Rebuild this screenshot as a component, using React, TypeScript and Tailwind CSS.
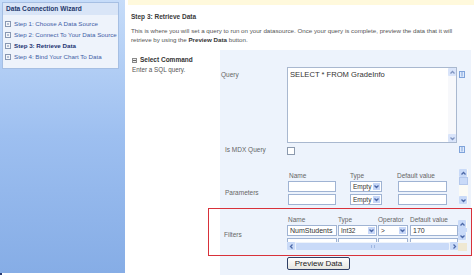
import React from 'react'

const FONT = "font-['Liberation_Sans',Arial,sans-serif]"

function StepIcon() {
  return (
    <span className="w-[6px] h-[6px] border border-[#8797b2] bg-[#f4f6fa] shrink-0 flex items-center justify-center">
      <span className="w-[2px] h-[2px] bg-[#b5c0d4]" />
    </span>
  )
}

function InfoIcon() {
  return (
    <svg width="6" height="7" viewBox="0 0 6 7" className="shrink-0 block">
      <rect x="0.5" y="0.5" width="5" height="6" fill="#dfeafc" stroke="#7fa3da" />
      <line x1="2" y1="2" x2="4" y2="2" stroke="#7fa3da" />
      <line x1="3" y1="3" x2="3" y2="5.5" stroke="#7fa3da" />
    </svg>
  )
}

function Chevron({ dir }: { dir: 'up' | 'down' | 'left' | 'right' }) {
  const d = {
    up: 'M1.5 4.5 L3.5 2.5 L5.5 4.5',
    down: 'M1.5 2.5 L3.5 4.5 L5.5 2.5',
    left: 'M4.5 1.5 L2.5 3.5 L4.5 5.5',
    right: 'M2.5 1.5 L4.5 3.5 L2.5 5.5',
  }[dir]
  return (
    <svg width="7" height="7" viewBox="0 0 7 7" className="block">
      <path d={d} fill="none" stroke="#4d69a8" strokeWidth="1.3" />
    </svg>
  )
}

function ScrollBtn({ dir }: { dir: 'up' | 'down' | 'left' | 'right' }) {
  return (
    <div className="w-[8px] h-[8px] bg-[#c9daf8] rounded-[1px] flex items-center justify-center shrink-0">
      <Chevron dir={dir} />
    </div>
  )
}

function TextBox({ w, value = '' }: { w: string; value?: string }) {
  return (
    <div className={`${w} h-[11px] bg-white border border-[#9fb3d3] text-[7px] text-[#333] leading-[9px] px-[2px] shrink-0 overflow-hidden whitespace-nowrap`}>
      {value}
    </div>
  )
}

function Select({ w, value }: { w: string; value: string }) {
  return (
    <div className={`${w} h-[11px] bg-white border border-[#9fb3d3] flex items-center justify-between pl-[2px] pr-[1px] shrink-0`}>
      <span className="text-[6.5px] text-[#333] leading-[9px]">{value}</span>
      <div className="w-[7px] h-[7px] bg-[#c7d7f7] flex items-center justify-center">
        <svg width="7" height="7" viewBox="0 0 7 7" className="block">
          <path d="M1.5 2.5 L3.5 4.5 L5.5 2.5" fill="none" stroke="#4d69a8" strokeWidth="1.3" />
        </svg>
      </div>
    </div>
  )
}

export default function App() {
  const steps = [
    { label: 'Step 1: Choose A Data Source', active: false },
    { label: 'Step 2: Connect To Your Data Source', active: false },
    { label: 'Step 3: Retrieve Data', active: true },
    { label: 'Step 4: Bind Your Chart To Data', active: false },
  ]

  return (
    <div className={`${FONT} relative w-[474px] h-[275px] flex bg-white overflow-hidden`}>
      {/* Sidebar */}
      <aside className="w-[125px] h-[273px] shrink-0 bg-gradient-to-b from-[#c6dcf9] via-[#9dbff0] to-[#86ade6] pt-[2px] pl-[2px] pr-[6px]">
        <div className="h-[67px] border border-[#a6bfe3] bg-[#eef3fb]">
          <div className="h-[12px] bg-[#d9e5f7] px-[3px] flex items-center text-[6.6px] font-bold text-[#1f386c]">
            Data Connection Wizard
          </div>
          <div className="flex flex-col gap-[5px] pt-[6px] pl-[2px]">
            {steps.map((s) => (
              <div key={s.label} className="flex items-center gap-[3px] h-[6px]">
                <StepIcon />
                <span
                  className={`text-[6.2px] leading-[6px] whitespace-nowrap ${
                    s.active ? 'font-bold text-[#1d3373]' : 'text-[#3e5da6]'
                  }`}
                >
                  {s.label}
                </span>
              </div>
            ))}
          </div>
        </div>
      </aside>

      {/* Main */}
      <main className="flex-1 ml-[3px] flex flex-col">
        <div className="h-[5px] bg-[#fff9dc] shrink-0" />
        <div className="pl-[3px] pt-[8px] text-[6.5px] font-bold text-[#3a3a3a] leading-[8px]">
          Step 3: Retrieve Data
        </div>
        <p className="pl-[3px] pt-[6px] text-[6.2px] text-[#555] leading-[8.5px]">
          This is where you will set a query to run on your datasource. Once your query is complete, preview the data that it will
          <br />
          retrieve by using the <b className="text-[#333]">Preview Data</b> button.
        </p>

        <div className="flex mt-[6px] flex-1">
          {/* Left description column */}
          <div className="w-[92px] shrink-0 pl-[4px] pt-[6px]">
            <div className="flex items-center gap-[3px] text-[6.5px] font-bold text-[#333] leading-[8px]">
              <span className="w-[5px] h-[5px] border border-[#8a8a8a] bg-[#eee] flex items-center justify-center">
                <span className="w-[3px] h-[1px] bg-[#666]" />
              </span>
              Select Command
            </div>
            <div className="pt-[2px] text-[6.3px] text-[#555] leading-[8px]">Enter a SQL query.</div>
          </div>

          {/* Blue panel */}
          <div className="w-[251px] shrink-0 h-[225px] bg-[#edf3fc] flex flex-col">
            {/* Query */}
            <div className="flex mt-[17px]">
              <div className="w-[67px] shrink-0 pl-[1px] pt-[4px] text-[6.5px] text-[#666] leading-[8px]">Query</div>
              <div className="w-[170px] h-[76px] bg-white border border-[#a9b8cf] flex">
                <div className="flex-1 px-[2px] pt-[3px] text-[7.6px] text-[#333] leading-[8px]">SELECT * FROM GradeInfo</div>
                <div className="w-[8px] flex flex-col justify-between bg-[#f4f6fa] opacity-70">
                  <ScrollBtn dir="up" />
                  <ScrollBtn dir="down" />
                </div>
              </div>
              <div className="pl-[2px] pt-[4px]">
                <InfoIcon />
              </div>
            </div>

            {/* MDX */}
            <div className="flex mt-[3px] h-[9px] items-center">
              <div className="w-[67px] shrink-0 pl-[5px] text-[6.5px] text-[#666] leading-[8px] -mt-[2px]">Is MDX Query</div>
              <div className="w-[8px] h-[8px] border border-[#8c9aae] bg-white" />
              <div className="ml-[164px] -mt-[2px]">
                <InfoIcon />
              </div>
            </div>

            {/* Parameters */}
            <div className="flex mt-[14px]">
              <div className="w-[67px] shrink-0 pl-[5px] pt-[20px] text-[6.5px] text-[#666] leading-[8px]">Parameters</div>
              <div className="flex">
                <div className="w-[171px] flex flex-col">
                  <div className="flex h-[12px] items-end pb-[1px] text-[6.5px] text-[#666] leading-[8px]">
                    <span className="w-[62px] pl-[2px]">Name</span>
                    <span className="w-[48px] pl-[1px]">Type</span>
                    <span>Default value</span>
                  </div>
                  <div className="flex items-center pl-[1px]">
                    <TextBox w="w-[48px]" />
                    <div className="w-[14px]" />
                    <Select w="w-[32px]" value="Empty" />
                    <div className="w-[16px]" />
                    <TextBox w="w-[49px]" />
                  </div>
                  <div className="flex items-center pl-[1px] mt-[2px]">
                    <TextBox w="w-[48px]" />
                    <div className="w-[14px]" />
                    <Select w="w-[32px]" value="Empty" />
                    <div className="w-[16px]" />
                    <TextBox w="w-[49px]" />
                  </div>
                </div>
                <div className="w-[9px] ml-[1px] h-[35px] flex flex-col bg-[#fbfbf6]">
                  <ScrollBtn dir="up" />
                  <div className="h-[8px] bg-[#c9daf8] border border-[#b4c8ec]" />
                  <div className="flex-1" />
                  <ScrollBtn dir="down" />
                </div>
              </div>
            </div>

            {/* Filters */}
            <div className="flex mt-[10px]">
              <div className="w-[67px] shrink-0 pl-[4px] pt-[16px] text-[6.5px] text-[#666] leading-[8px]">Filters</div>
              <div className="flex">
                <div className="w-[171px] flex flex-col">
                  <div className="flex h-[10px] items-end pb-[1px] text-[6.5px] text-[#666] leading-[8px]">
                    <span className="w-[51px] pl-[1px]">Name</span>
                    <span className="w-[40px]">Type</span>
                    <span className="w-[32px]">Operator</span>
                    <span>Default value</span>
                  </div>
                  <div className="flex items-center">
                    <TextBox w="w-[50px]" value="NumStudents" />
                    <div className="w-[1px]" />
                    <Select w="w-[39px]" value="Int32" />
                    <div className="w-[1px]" />
                    <Select w="w-[30px]" value=">" />
                    <div className="w-[2px]" />
                    <TextBox w="w-[48px]" value="170" />
                  </div>
                  <div className="flex h-[4px] mt-[2px] overflow-hidden">
                    <div className="w-[50px] border-t border-x border-[#9fb3d3] bg-white" />
                    <div className="w-[1px]" />
                    <div className="w-[39px] border-t border-x border-[#9fb3d3] bg-white" />
                    <div className="w-[1px]" />
                    <div className="w-[30px] border-t border-x border-[#9fb3d3] bg-white" />
                    <div className="w-[2px]" />
                    <div className="w-[48px] border-t border-x border-[#9fb3d3] bg-white" />
                  </div>
                  <div className="flex h-[8px] bg-[#eef3fb] items-center gap-[1px]">
                    <ScrollBtn dir="left" />
                    <div className="flex-1 h-[7px] bg-[#c9daf8] rounded-[1px] flex items-center justify-center">
                      <span className="w-[4px] h-[3px] border-x border-[#9fb6e0]" />
                    </div>
                    <ScrollBtn dir="right" />
                  </div>
                </div>
                <div className="w-[9px] flex flex-col">
                  <div className="h-[5px]" />
                  <div className="flex flex-col h-[20px] bg-[#fbfbf6]">
                    <ScrollBtn dir="up" />
                    <div className="h-[4px] bg-[#c9daf8]" />
                    <div className="flex-1" />
                    <ScrollBtn dir="down" />
                  </div>
                  <div className="h-[3px]" />
                  <div className="h-[8px] bg-[#efe8d2]" />
                </div>
              </div>
            </div>

            {/* Button */}
            <div className="flex pl-[67px] mt-[6px]">
              <button className="w-[63px] h-[13px] border border-[#2f3f66] rounded-[2px] bg-gradient-to-b from-white to-[#e6e6e0] text-[8px] text-[#222] leading-[11px]">
                Preview Data
              </button>
            </div>
          </div>
        </div>
      </main>

      {/* Highlight annotation */}
      <div className="absolute left-[208px] top-[208px] w-[264px] h-[48px] border border-[#d8313a]" />
      <div className="absolute left-0 top-[273px] w-[2px] h-[2px] bg-[#2a3b70]" />
    </div>
  )
}
